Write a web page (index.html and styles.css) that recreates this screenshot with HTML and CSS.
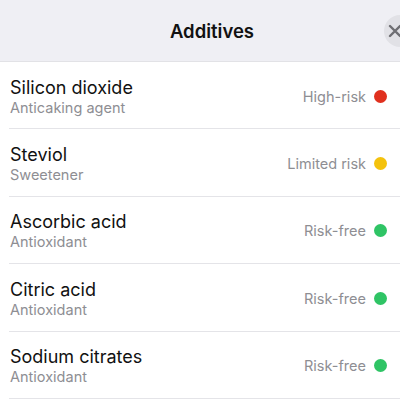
FILE: index.html
```html
<!DOCTYPE html>
<html lang="en">
	<head>
		<meta charset="UTF-8" />
		<meta name="viewport" content="width=device-width, initial-scale=1.0" />
		<title>Additives</title>
		<link rel="stylesheet" href="styles.css">
	</head>
	<body>
		<div id="sheet">
			<header class="bar">
				<h1>Additives</h1>
				<button class="close" aria-label="Close">
					<svg width="14" height="14" viewBox="0 0 14 14">
						<path d="M2 2 L12 12 M12 2 L2 12" stroke="#6e6e73" stroke-width="2.4" stroke-linecap="round" />
					</svg>
				</button>
			</header>

			<ul class="list">
				<li class="row">
					<div class="info">
						<span class="name">Silicon dioxide</span>
						<span class="kind">Anticaking agent</span>
					</div>
					<span class="risk">High-risk</span>
					<span class="dot high"></span>
				</li>
				<li class="row">
					<div class="info">
						<span class="name">Steviol</span>
						<span class="kind">Sweetener</span>
					</div>
					<span class="risk">Limited risk</span>
					<span class="dot limited"></span>
				</li>
				<li class="row">
					<div class="info">
						<span class="name">Ascorbic acid</span>
						<span class="kind">Antioxidant</span>
					</div>
					<span class="risk">Risk-free</span>
					<span class="dot free"></span>
				</li>
				<li class="row">
					<div class="info">
						<span class="name">Citric acid</span>
						<span class="kind">Antioxidant</span>
					</div>
					<span class="risk">Risk-free</span>
					<span class="dot free"></span>
				</li>
				<li class="row">
					<div class="info">
						<span class="name">Sodium citrates</span>
						<span class="kind">Antioxidant</span>
					</div>
					<span class="risk">Risk-free</span>
					<span class="dot free"></span>
				</li>
			</ul>
		</div>
	</body>
</html>
```

FILE: styles.css
```css
html,
body {
	margin: 0;
	background: #ffffff;
	font-family: Inter, "Noto Sans", sans-serif;
	overflow: hidden;
}
#sheet {
	width: 400px;
}
.bar {
	display: flex;
	align-items: center;
	justify-content: center;
	height: 62px;
	background: #efeff4;
	border-bottom: 1px solid #e2e2e6;
	box-sizing: border-box;
	position: relative;
	padding-left: 24px;
}
.bar h1 {
	margin: 0;
	font-size: 18.5px;
	font-weight: 600;
	color: #111111;
}
.close {
	position: absolute;
	right: -16px;
	top: 15px;
	width: 32px;
	height: 32px;
	border: none;
	border-radius: 50%;
	background: #e1e1e6;
	padding: 0 0 0 4px;
	display: flex;
	align-items: center;
	justify-content: flex-start;
}
.list {
	list-style: none;
	margin: 0;
	padding: 0 0 0 9px;
}
.row {
	display: flex;
	align-items: center;
	height: 67.4px;
	box-sizing: border-box;
	border-bottom: 1px solid #e4e4e8;
	padding-right: 13px;
}
.info {
	flex: 1;
	display: flex;
	flex-direction: column;
	padding: 3px 0 0 1px;
}
.name {
	font-size: 18px;
	color: #111111;
	line-height: 22px;
}
.kind {
	font-size: 14.5px;
	color: #8e8e93;
	line-height: 18px;
}
.risk {
	font-size: 14.5px;
	color: #8e8e93;
	margin: 2px 8px 0 0;
}
.dot {
	width: 13px;
	height: 13px;
	border-radius: 50%;
	margin-top: 2px;
}
.high {
	background: #e0301e;
}
.limited {
	background: #f4c20d;
}
.free {
	background: #2fc465;
}
```
